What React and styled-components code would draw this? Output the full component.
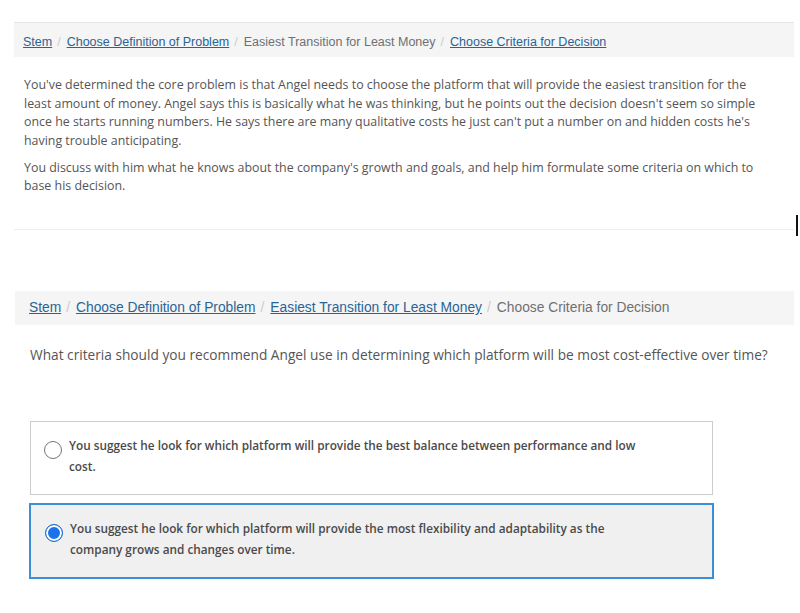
import styled, { createGlobalStyle } from "styled-components";

const GlobalStyle = createGlobalStyle`
  body {
    margin: 0;
    background: #fff;
    font-family: "Open Sans", "Liberation Sans", sans-serif;
  }
`;

const Page = styled.div`
  position: relative;
  width: 800px;
  height: 613px;
  overflow: hidden;
  padding-top: 22px;
  box-sizing: border-box;
`;

const Panel = styled.section`
  margin: ${(p) => (p.$bordered ? "0 6px 0 14px" : "61px 6px 0 15px")};
  border-top: ${(p) => (p.$bordered ? "1px solid #e6e6e6" : "none")};
  border-bottom: ${(p) => (p.$bordered ? "1px solid #eeeeee" : "none")};
  padding-bottom: ${(p) => (p.$bordered ? "33px" : "0")};
`;

const Crumbs = styled.ol`
  list-style: none;
  margin: 0;
  display: flex;
  align-items: center;
  box-sizing: border-box;
  background: #f5f5f5;
  height: 34px;
  padding: ${(p) => (p.$large ? "0 0 0 14px" : "3px 0 0 9px")};
  font-family: "Liberation Sans", Arial, sans-serif;
  font-size: ${(p) => (p.$large ? "13.8px" : "12.5px")};
`;

const Crumb = styled.li`
  color: #707070;
  white-space: nowrap;

  & + &::before {
    content: "/";
    color: #cccccc;
    padding: 0 6px 0 5px;
  }
`;

const CrumbLink = styled.a`
  color: #2a6496;
  text-decoration: underline;
`;

const Text = styled.p`
  margin: ${(p) => (p.$first ? "19px" : "8.5px")} 0 0;
  padding: 0 30px 0 10px;
  font-size: 12.4px;
  line-height: 18.5px;
  color: #555;
`;

const Question = styled.p`
  margin: 20px 0 0 15px;
  font-size: 13.7px;
  line-height: 20px;
  color: #555;
`;

const Options = styled.div`
  margin: 56px 0 0 15px;
  width: 683px;
  display: flex;
  flex-direction: column;
  gap: 8px;
`;

const Option = styled.label`
  display: flex;
  align-items: flex-start;
  gap: 7px;
  box-sizing: border-box;
  min-height: ${(p) => (p.$selected ? "76px" : "74px")};
  margin: ${(p) => (p.$selected ? "0 -1px" : "0")};
  padding: ${(p) => (p.$selected ? "13px 56px 0 14px" : "13px 56px 0 13px")};
  border: ${(p) => (p.$selected ? "2px solid #3d8ed4" : "1px solid #cccccc")};
  background: ${(p) => (p.$selected ? "#f0f0f0" : "#fff")};
  cursor: pointer;
`;

const Radio = styled.span`
  flex: none;
  width: 18px;
  height: 18px;
  margin-top: 6px;
  border-radius: 50%;
  box-sizing: border-box;
  border: 1px solid ${(p) => (p.$checked ? "#1a6fd6" : "#767676")};
  background: ${(p) => (p.$checked ? "#1a73e8" : "#fff")};
  box-shadow: ${(p) => (p.$checked ? "inset 0 0 0 2px #fff" : "none")};
`;

const OptionText = styled.span`
  font-size: 11.8px;
  font-weight: 600;
  line-height: 21px;
  color: #4a4a4a;
`;

const Caret = styled.span`
  position: absolute;
  left: 796px;
  top: 215px;
  width: 2px;
  height: 21px;
  background: #111;
`;

const trail = [
  "Stem",
  "Choose Definition of Problem",
  "Easiest Transition for Least Money",
  "Choose Criteria for Decision",
];

function Breadcrumb({ active, large }) {
  return (
    <Crumbs $large={large}>
      {trail.map((item, i) => (
        <Crumb key={item}>
          {i === active ? item : <CrumbLink href="#">{item}</CrumbLink>}
        </Crumb>
      ))}
    </Crumbs>
  );
}

const choices = [
  "You suggest he look for which platform will provide the best balance between performance and low cost.",
  "You suggest he look for which platform will provide the most flexibility and adaptability as the company grows and changes over time.",
];

export default function App() {
  const selected = 1;
  return (
    <Page>
      <GlobalStyle />
      <Panel $bordered>
        <Breadcrumb active={2} />
        <Text $first>
          You've determined the core problem is that Angel needs to choose the
          platform that will provide the easiest transition for the least
          amount of money. Angel says this is basically what he was thinking,
          but he points out the decision doesn't seem so simple once he starts
          running numbers. He says there are many qualitative costs he just
          can't put a number on and hidden costs he's having trouble
          anticipating.
        </Text>
        <Text>
          You discuss with him what he knows about the company's growth and
          goals, and help him formulate some criteria on which to base his
          decision.
        </Text>
      </Panel>
      <Caret />
      <Panel>
        <Breadcrumb active={3} large />
        <Question>
          What criteria should you recommend Angel use in determining which
          platform will be most cost-effective over time?
        </Question>
        <Options>
          {choices.map((c, i) => (
            <Option key={i} $selected={i === selected}>
              <Radio $checked={i === selected} />
              <OptionText>{c}</OptionText>
            </Option>
          ))}
        </Options>
      </Panel>
    </Page>
  );
}
